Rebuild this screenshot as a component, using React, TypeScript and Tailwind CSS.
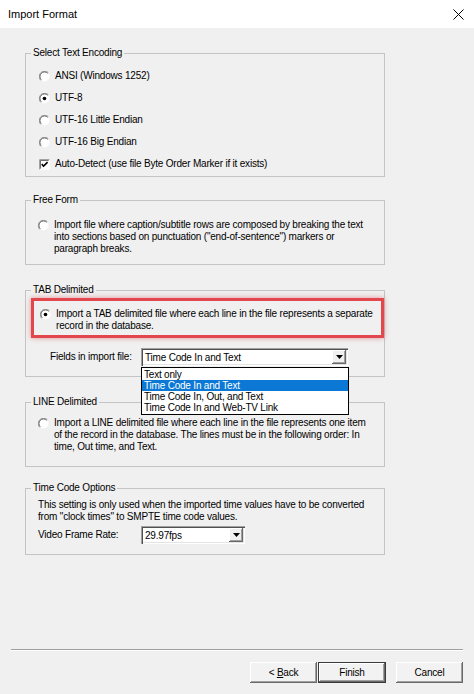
import React from "react";

const encodings = [
    { id: "ansi", label: "ANSI (Windows 1252)" },
    { id: "utf8", label: "UTF-8" },
    { id: "utf16le", label: "UTF-16 Little Endian" },
    { id: "utf16be", label: "UTF-16 Big Endian" },
];

const fieldOptions = [
    "Text only",
    "Time Code In and Text",
    "Time Code In, Out, and Text",
    "Time Code In and Web-TV Link",
];

function Radio({ checked = false }: { checked?: boolean }) {
    return (
        <svg width="11" height="11" viewBox="0 0 12 12" className="shrink-0">
            <circle cx="6" cy="6" r="5.5" fill="#ffffff" />
            <path d="M10.24 1.76 A6 6 0 0 0 1.76 10.24" fill="none" stroke="#a0a0a0" strokeWidth="1" />
            <path d="M9.54 2.46 A5 5 0 0 0 2.46 9.54" fill="none" stroke="#505050" strokeWidth="1" />
            {checked && <circle cx="6" cy="6" r="2" fill="#000000" />}
        </svg>
    );
}

function Checkbox({ checked = false }: { checked?: boolean }) {
    return (
        <svg width="11" height="11" viewBox="0 0 12 12" className="shrink-0">
            <rect x="0" y="0" width="12" height="12" fill="#ffffff" />
            <path d="M0.5 11.5 V0.5 H11.5" fill="none" stroke="#a0a0a0" strokeWidth="1" />
            <path d="M1.5 10.5 V1.5 H10.5" fill="none" stroke="#505050" strokeWidth="1" />
            {checked && <path d="M3 5.6 L5 7.8 L9.4 3.4" fill="none" stroke="#000000" strokeWidth="1.7" />}
        </svg>
    );
}

function Combo({ value, width }: { value: string; width: string }) {
    return (
        <div className={`flex h-[18px] ${width} bg-white shadow-[inset_1px_1px_0_#a0a0a0,inset_2px_2px_0_#505050,inset_-1px_-1px_0_#ffffff,inset_-2px_-2px_0_#e3e3e3]`}>
            <span className="flex-1 pl-[4px] pt-[3px] leading-[13px] whitespace-nowrap">{value}</span>
            <div className="my-[2px] mr-[2px] w-[14px] flex items-center justify-center bg-[#f0f0f0] shadow-[inset_-1px_-1px_0_#696969,inset_1px_1px_0_#ffffff,inset_-2px_-2px_0_#a0a0a0]">
                <svg width="7" height="4" viewBox="0 0 7 4">
                    <path d="M0 0 H7 L3.5 4 Z" fill="#000000" />
                </svg>
            </div>
        </div>
    );
}

function Group({ title, className, children }: { title: string; className: string; children: React.ReactNode }) {
    return (
        <fieldset className={`min-w-0 border border-[#c4c4c4] ${className}`}>
            <legend className="ml-[5px] px-[2px] leading-[12px]">{title}</legend>
            {children}
        </fieldset>
    );
}

function DialogButton({ children, isDefault = false, className }: { children: React.ReactNode; isDefault?: boolean; className: string }) {
    return (
        <button
            className={`h-[21px] flex items-center justify-center bg-[#f2f2f2] ${isDefault ? "border border-[#3a3a3a] shadow-[inset_-1px_-1px_0_#696969,inset_1px_1px_0_#ffffff,inset_-2px_-2px_0_#a0a0a0]" : "shadow-[inset_-1px_-1px_0_#696969,inset_1px_1px_0_#ffffff,inset_-2px_-2px_0_#a0a0a0]"} ${className}`}
        >
            {children}
        </button>
    );
}

export default function App() {
    const selectedEncoding = "utf8";

    return (
        <div className="w-[474px] h-[694px] flex flex-col bg-[#f0f0f0] text-black font-['Liberation_Sans',Arial,sans-serif] text-[10px] tracking-[-0.2px] leading-[12px]">
            {/* Title bar */}
            <div className="h-[28px] shrink-0 flex items-center justify-between bg-white pl-[8px] pr-[10px]">
                <span className="text-[11px] tracking-normal">Import Format</span>
                <svg width="11" height="11" viewBox="0 0 11 11">
                    <path d="M0.5 0.5 L10.5 10.5 M10.5 0.5 L0.5 10.5" stroke="#000000" strokeWidth="1" />
                </svg>
            </div>

            <div className="ml-[25px] w-[360px] flex flex-col">
                {/* Select Text Encoding */}
                <Group title="Select Text Encoding" className="mt-[19px]">
                    <div className="pt-[6px] pb-[1px] pl-[13px]">
                        {encodings.map((enc) => (
                            <div key={enc.id} className="h-[22px] flex items-center gap-[5px]">
                                <Radio checked={enc.id === selectedEncoding} />
                                <span>{enc.label}</span>
                            </div>
                        ))}
                        <div className="h-[22px] flex items-center gap-[5px]">
                            <Checkbox checked />
                            <span>Auto-Detect (use file Byte Order Marker if it exists)</span>
                        </div>
                    </div>
                </Group>

                {/* Free Form */}
                <Group title="Free Form" className="mt-[17px]">
                    <div className="pt-[13px] pb-[9px] pl-[12px] flex items-start gap-[5px]">
                        <span className="mt-[1px]"><Radio /></span>
                        <p className="whitespace-nowrap">
                            Import file where caption/subtitle rows are composed by breaking the text<br />
                            into sections based on punctuation ("end-of-sentence") markers or<br />
                            paragraph breaks.
                        </p>
                    </div>
                </Group>

                {/* TAB Delimited */}
                <Group title="TAB Delimited" className="mt-[19px]">
                    <div className="pt-[2px] pb-[10px]">
                        <div className="ml-[5px] border-[3px] border-[#e2474d] shadow-[0_0_5px_rgba(214,70,75,0.55)] pt-[7px] pb-[3px] pl-[6px] flex items-start gap-[5px]">
                            <span className="mt-[1px]"><Radio checked /></span>
                            <p className="whitespace-nowrap">
                                Import a TAB delimited file where each line in the file represents a separate<br />
                                record in the database.
                            </p>
                        </div>
                        <div className="mt-[10px] pl-[24px] flex items-center">
                            <span className="w-[91px] whitespace-nowrap">Fields in import file:</span>
                            <div className="relative">
                                <Combo value="Time Code In and Text" width="w-[207px]" />
                                <ul className="absolute left-0 top-full mt-[1px] z-10 w-[208px] border border-black bg-white py-[1px]">
                                    {fieldOptions.map((opt) => (
                                        <li
                                            key={opt}
                                            className={`h-[11px] leading-[11px] pl-[2px] whitespace-nowrap ${opt === "Time Code In and Text" ? "bg-[#0a78d4] text-white" : ""}`}
                                        >
                                            {opt}
                                        </li>
                                    ))}
                                </ul>
                            </div>
                        </div>
                    </div>
                </Group>

                {/* LINE Delimited */}
                <Group title="LINE Delimited" className="mt-[19px]">
                    <div className="pt-[9px] pb-[13px] pl-[12px] flex items-start gap-[5px]">
                        <span className="mt-[1px]"><Radio /></span>
                        <p className="whitespace-nowrap">
                            Import a LINE delimited file where each line in the file represents one item<br />
                            of the record in the database. The lines must be in the following order: In<br />
                            time, Out time, and Text.
                        </p>
                    </div>
                </Group>

                {/* Time Code Options */}
                <Group title="Time Code Options" className="mt-[15px]">
                    <div className="pt-[5px] pb-[10px] pl-[12px]">
                        <p className="whitespace-nowrap">
                            This setting is only used when the imported time values have to be converted<br />
                            from "clock times" to SMPTE time code values.
                        </p>
                        <div className="mt-[3px] flex items-center">
                            <span className="w-[103px]">Video Frame Rate:</span>
                            <Combo value="29.97fps" width="w-[104px]" />
                        </div>
                    </div>
                </Group>
            </div>

            {/* Footer */}
            <div className="mt-auto">
                <div className="mx-[11px] h-px bg-[#a0a0a0] shadow-[0_1px_0_#ffffff]" />
                <div className="flex justify-end pr-[11px] pt-[12px] pb-[11px]">
                    <DialogButton className="w-[67px]">
                        &lt;&nbsp;<span className="underline">B</span>ack
                    </DialogButton>
                    <DialogButton isDefault className="ml-[1px] w-[68px]">Finish</DialogButton>
                    <DialogButton className="ml-[10px] w-[67px]">Cancel</DialogButton>
                </div>
            </div>
        </div>
    );
}
